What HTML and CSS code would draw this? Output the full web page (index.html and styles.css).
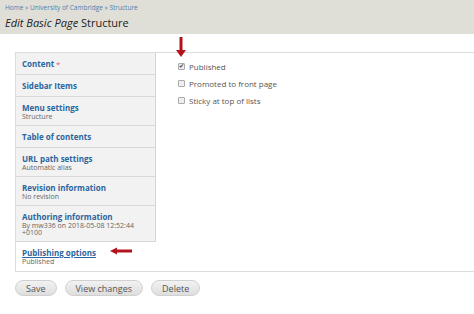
FILE: index.html
```html
<!DOCTYPE html>
<html lang="en">
<head>
  <meta charset="UTF-8" />
  <title>Edit Basic Page Structure</title>
  <link rel="stylesheet" href="styles.css">
</head>
<body>
  <!-- Page header -->
  <div class="page-header">
    <div class="breadcrumb">
      <a href="#">Home</a> » <a href="#">University of Cambridge</a> » <a href="#">Structure</a>
    </div>
    <h1><em>Edit Basic Page</em> Structure</h1>
  </div>

  <!-- Vertical tabs -->
  <div class="content">
    <div class="vtabs">
      <ul class="tab-list">
        <li class="tab"><a href="#">Content</a> <span class="req">*</span></li>
        <li class="tab"><a href="#">Sidebar Items</a></li>
        <li class="tab"><a href="#">Menu settings</a><span class="summary">Structure</span></li>
        <li class="tab"><a href="#">Table of contents</a></li>
        <li class="tab"><a href="#">URL path settings</a><span class="summary">Automatic alias</span></li>
        <li class="tab"><a href="#">Revision information</a><span class="summary">No revision</span></li>
        <li class="tab"><a href="#">Authoring information</a><span class="summary">By mw336 on 2018-05-08 12:52:44 +0100</span></li>
        <li class="tab selected"><a href="#">Publishing options</a><span class="summary">Published</span></li>
      </ul>
      <div class="panel">
        <label class="check"><span class="box checked">&#10004;</span>Published</label>
        <label class="check"><span class="box"></span>Promoted to front page</label>
        <label class="check"><span class="box"></span>Sticky at top of lists</label>
      </div>
    </div>

    <div class="actions">
      <button class="btn">Save</button>
      <button class="btn">View changes</button>
      <button class="btn">Delete</button>
    </div>
  </div>

  <!-- Annotation arrows -->
  <svg class="arrow arrow-down" width="12" height="22" viewBox="0 0 12 22">
    <rect x="4.5" y="0" width="3" height="15" fill="#b3141c" />
    <polygon points="1,13 11,13 6,20" fill="#b3141c" />
  </svg>
  <svg class="arrow arrow-left" width="24" height="10" viewBox="0 0 24 10">
    <rect x="6" y="3.5" width="17" height="3" fill="#b3141c" />
    <polygon points="1,5 8,1.5 8,8.5" fill="#b3141c" />
  </svg>
</body>
</html>
```

FILE: styles.css
```css
* {
  box-sizing: border-box;
  margin: 0;
  padding: 0;
}

body {
  font-family: 'Open Sans', 'DejaVu Sans', sans-serif;
  background: #fff;
  color: #333;
  width: 474px;
  height: 314px;
  overflow: hidden;
  position: relative;
}

a {
  color: #2b65a0;
  text-decoration: none;
}

/* === HEADER === */
.page-header {
  background: #e0dfd7;
  height: 34px;
  padding: 3px 5px 0;
}

.breadcrumb {
  font-size: 6.5px;
  line-height: 10px;
  color: #4b7fae;
}

.breadcrumb a {
  color: #4b7fae;
}

.page-header h1 {
  font-size: 11px;
  font-weight: normal;
  line-height: 17px;
  color: #222;
  margin-top: 1px;
}

/* === VERTICAL TABS === */
.content {
  padding: 18px 0 0 15px;
}

.vtabs {
  display: flex;
  border-top: 1px solid #dcdcdc;
  border-bottom: 1px solid #dcdcdc;
  border-left: 1px solid #dcdcdc;
}

.tab-list {
  list-style: none;
  width: 140px;
  background: #f2f2f2;
  border-right: 1px solid #d4d4d4;
}

.tab {
  padding: 5px 14px 5px 6px;
  border-bottom: 1px solid #d8d8d8;
  font-size: 7px;
  line-height: 7px;
  color: #666;
}

.tab a {
  display: inline-block;
  font-size: 8px;
  font-weight: bold;
  line-height: 11px;
}

.tab .summary {
  display: block;
}

.tab .req {
  color: #e06060;
  font-size: 8px;
}

.tab.selected {
  background: #fff;
  border-bottom: none;
  margin-right: -1px;
  padding-bottom: 6px;
}

.tab.selected a {
  text-decoration: underline;
}

.panel {
  flex: 1;
  padding: 5px 0 0 22px;
}

.check {
  display: flex;
  align-items: center;
  height: 17px;
  font-size: 8px;
  color: #555;
}

.box {
  width: 7px;
  height: 7px;
  margin-right: 4px;
  border: 1px solid #aaa;
  border-radius: 1px;
  background: #eee;
  font-size: 6px;
  line-height: 5px;
  text-align: center;
  color: #333;
}

/* === ACTIONS === */
.actions {
  display: flex;
  gap: 8px;
  margin-top: 8px;
}

.btn {
  height: 16px;
  padding: 0 10px;
  border: 1px solid #d0d0d0;
  border-radius: 8px;
  background: linear-gradient(#f2f2f2, #dedede);
  font-family: 'Open Sans', 'DejaVu Sans', sans-serif;
  font-size: 9px;
  color: #555;
}

/* Annotation arrows */
.arrow {
  position: absolute;
}

.arrow-down {
  left: 175px;
  top: 37px;
}

.arrow-left {
  left: 109px;
  top: 246px;
}
```
